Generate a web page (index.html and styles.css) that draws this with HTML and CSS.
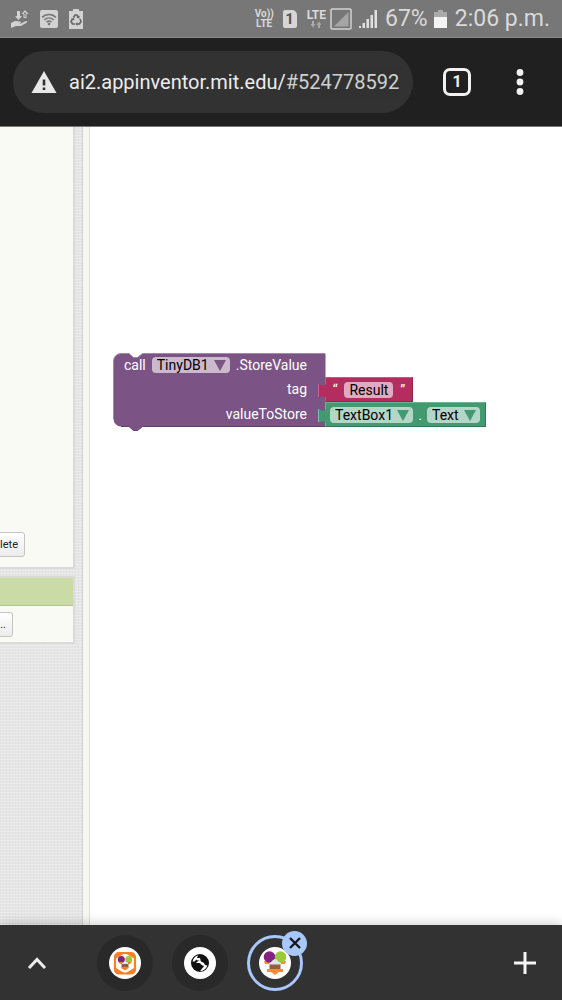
FILE: index.html
```html
<!DOCTYPE html>
<html lang="en">
<head>
    <meta charset="UTF-8">
    <meta name="viewport" content="width=device-width, initial-scale=1.0">
    <title>MIT App Inventor</title>
    <link rel="stylesheet" href="styles.css">
</head>
<body>
    <header class="status-bar">
        <div class="status-left">
            <svg width="20" height="20" viewBox="0 0 20 20" fill="#d2d2d2">
                <path d="M7 2h3v5h2l-3.500 4L5 7h2zM15 1l3.500 4h-2v4h-3V5h-2z"/>
                <path d="M15 3l-1.500 1.800h1V8h1V4.800h1z" fill="#777"/>
                <path d="M1 14l4-2 5 .5c1.500.3 1 1.700-.5 1.800H8l3 .2 5-2.500c1.500-.3 1.500 1 .5 1.700L11 17H6l-5 2z"/>
            </svg>
            <svg width="20" height="20" viewBox="0 0 20 20">
                <rect x="1" y="1" width="18" height="18" rx="2" fill="#d2d2d2"/>
                <g fill="none" stroke="#777" stroke-width="1.600">
                    <path d="M3 8.500c4-4 10-4 14 0M5.300 11c2.800-2.700 6.600-2.700 9.400 0M7.600 13.200c1.500-1.300 3.300-1.300 4.800 0"/>
                </g>
                <circle cx="10" cy="15" r="1.300" fill="#777"/>
            </svg>
            <svg width="16" height="22" viewBox="0 0 16 22">
                <path d="M1 3h4V1h6v2h4v18H1z" fill="#d2d2d2"/>
                <g fill="none" stroke="#666" stroke-width="1.700">
                    <path d="M5.500 9.500L7 7h2l1.500 2.500M12 11l1 2.500-1.500 2.500H9M7 16H4.500L3 13.500 4.500 11"/>
                </g>
                <path d="M11.500 7.500v3l-3-.7zM9.500 14v4l-2.200-2zM3 10.500l3-.5.500 2.500z" fill="#666"/>
            </svg>
        </div>
        <div class="status-right">
            <span class="volte"><span>Vo))</span><span>LTE</span></span>
            <span class="sim">1</span>
            <span class="lte">LTE
                <svg width="12" height="7" viewBox="0 0 12 7" fill="#aaa"><path d="M2 0h2v3h1.500L3 6.500.5 3H2zM8 7h2V4h1.500L9 .5 6.500 4H8z"/></svg>
            </span>
            <svg class="roaming" width="22" height="22" viewBox="0 0 22 22">
                <rect x="1" y="1" width="20" height="20" rx="1" fill="none" stroke="#d2d2d2" stroke-width="1.500"/>
                <path d="M4 18.500L18.500 4v14.500z" fill="#a5a5a5"/>
            </svg>
            <svg class="signal" width="20" height="20" viewBox="0 0 20 20" fill="#e0e0e0">
                <path d="M1 17h2v2H1zM4.500 14H7v5H4.500zM8.500 10H11v9H8.500zM12.500 6H15v13h-2.500zM16.500 1H19v18h-2.500z"/>
            </svg>
            <span class="status-text percent">67%</span>
            <svg class="battery" width="13" height="18" viewBox="0 0 13 18">
                <path d="M0 2h4V0h5v2h4v5H0z" fill="#aaa"/>
                <path d="M0 7h13v11H0z" fill="#f4f4f4"/>
            </svg>
            <time class="status-text">2:06 p.m.</time>
        </div>
    </header>

    <nav class="toolbar">
        <div class="omnibox">
            <svg width="26" height="24" viewBox="0 0 26 24">
                <path d="M13 1l12.500 22H.5z" fill="#e8e8e8"/>
                <path d="M11.700 9.500h2.600v6h-2.600zM11.700 17.500h2.600V20h-2.600z" fill="#323232"/>
            </svg>
            <div class="url-box">
                <input class="url" type="text" aria-label="Address" value="ai2.appinventor.mit.edu/#524778592">
            </div>
        </div>
        <button class="tab-count" aria-label="Open tabs"><span>1</span></button>
        <button class="menu-btn" aria-label="Menu">
            <svg width="8" height="28" viewBox="0 0 8 28" fill="#f1f1f1">
                <circle cx="4" cy="4.500" r="3.400"/><circle cx="4" cy="14" r="3.400"/><circle cx="4" cy="23.500" r="3.400"/>
            </svg>
        </button>
    </nav>

    <main class="designer">
        <aside class="sidebar">
            <section class="panel panel-blocks">
                <button class="gray-btn delete-btn">Delete</button>
            </section>
            <section class="panel panel-media">
                <div class="panel-head"></div>
                <button class="gray-btn upload-btn">Upload File ...</button>
            </section>
        </aside>
        <div class="gutter"></div>

        <div class="workspace">
            <div class="block-stack">
                <div class="call-block">
                    <svg class="call-shape" width="213" height="79" viewBox="0 0 213 79">
                        <path d="M0.500 8A7.500 7.500 0 0 1 8 .5H16l4.500 4h4l5-4H212.500V73.500H29.500l-5 4h-4l-4.500-4H8A7.500 7.500 0 0 1 .5 66z" fill="#7c5385"/>
                        <path d="M0.500 66V8A7.500 7.500 0 0 1 8 .5H16l4.500 4h4l5-4H212" fill="none" stroke="#a488aa"/>
                        <path d="M212.500 73.500H29.500l-5 4h-4l-4.500-4H8" fill="none" stroke="#5f3d68"/>
                    </svg>
                    <div class="call-row first">
                        <span>call</span>
                        <span class="drop drop-purple">
                            <select aria-label="Component"><option>TinyDB1</option></select>
                        </span>
                        <span>.StoreValue</span>
                    </div>
                    <div class="call-row">tag</div>
                    <div class="call-row">valueToStore</div>
                </div>
                <div class="values">
                    <div class="value-block text-block">
                        <svg class="plug" width="9" height="16" viewBox="0 0 9 16"><path d="M9 0C9 6 1 0 1 1v13c0 2 8-4 8 2z" fill="#b32d5e"/><path d="M1.500 14V1" stroke="#d0648c"/></svg>
                        <span>“</span>
                        <input class="text-field" type="text" aria-label="Text" value="Result">
                        <span>”</span>
                    </div>
                    <div class="value-block getter-block">
                        <svg class="plug" width="9" height="16" viewBox="0 0 9 16"><path d="M9 0C9 6 1 0 1 1v13c0 2 8-4 8 2z" fill="#439970"/><path d="M1.500 14V1" stroke="#80bc9f"/></svg>
                        <span class="drop drop-green drop-wide">
                            <select aria-label="Text box"><option>TextBox1</option></select>
                        </span>
                        <span>.</span>
                        <span class="drop drop-green drop-narrow">
                            <select aria-label="Property"><option>Text</option></select>
                        </span>
                    </div>
                </div>
            </div>
        </div>
    </main>

    <footer class="tab-strip">
        <button class="strip-btn" aria-label="Expand tabs">
            <svg width="20" height="14" viewBox="0 0 20 14"><path d="M2 12l8-8.500 8 8.500" fill="none" stroke="#ececec" stroke-width="3"/></svg>
        </button>
        <div class="tabs">
            <button class="tab" aria-label="Community">
                <svg width="32" height="32" viewBox="0 0 32 32">
                    <circle cx="16" cy="16" r="16" fill="#fff"/>
                    <rect x="6" y="6" width="20" height="20.500" rx="4" fill="#fff" stroke="#f58025" stroke-width="2.200"/>
                    <path d="M7 6h9l-9 5.500zM25 6h-9l9 5.500zM7 26.500h9L7 21zM25 26.500h-9l9-5.500z" fill="#f58025"/>
                    <circle cx="12.300" cy="12.500" r="3.500" fill="#85217f"/>
                    <circle cx="19.700" cy="12.500" r="3.500" fill="#9bc93c"/>
                    <path d="M9.500 15h3.500v2h-2zM19 15h3.500L21 17h-2zM11.500 20.500h9L16 23.500z" fill="#f58025"/>
                    <path d="M12.500 17h7v3.500h-7z" fill="#955f3d"/>
                    <path d="M13.500 15.500h5v1.500h-5z" fill="#dde5e7"/>
                </svg>
            </button>
            <button class="tab" aria-label="Web page">
                <svg width="32" height="32" viewBox="0 0 32 32">
                    <circle cx="16" cy="16" r="16" fill="#fff"/>
                    <circle cx="16" cy="16" r="9" fill="#111"/>
                    <path d="M8.600 14.500c.5-3 2.400-5.200 5.400-6l-1 2.500h3l.5 2-3 1.500-1.500 1.500h3.500c1.500 0 1.500 2.500 3 2.500 2 0 1.500 1.500 0 2.500l-2.500 3.200c3.500-.3 6.500-2.500 7.300-5.700l-2.300-.5-1-2-3-1.500v-1h-3.500l-1-1-2 2z" fill="#fff"/>
                </svg>
            </button>
            <button class="tab active" aria-label="App Inventor">
                <svg width="32" height="32" viewBox="0 0 32 32">
                    <circle cx="16" cy="16" r="16" fill="#fff"/>
                    <path d="M5 14l6 0-1 3-4 0zM27 14l-6 0 1 3 4 0zM8 22h16v3h-4l-2 1.500L16 28l-2-1.500-2-1.500H8z" fill="#f68b3b"/>
                    <circle cx="10.500" cy="10" r="5.800" fill="#85217f"/>
                    <circle cx="21.500" cy="10" r="5.800" fill="#9bc93c"/>
                    <path d="M9 18l5-5 2-1 2 1 5 5z" fill="#dde5e7"/>
                    <path d="M10.500 17.500h11V22h-11z" fill="#955f3d"/>
                </svg>
                <span class="close-badge">
                    <svg width="12" height="12" viewBox="0 0 12 12"><path d="M1 1l10 10M11 1L1 11" stroke="#16191d" stroke-width="2.400"/></svg>
                </span>
            </button>
        </div>
        <button class="strip-btn" aria-label="New tab">
            <svg width="24" height="24" viewBox="0 0 24 24"><path d="M12 1v22M1 12h22" stroke="#f4f4f4" stroke-width="3"/></svg>
        </button>
    </footer>
</body>
</html>
```

FILE: styles.css
```css
* {
    box-sizing: border-box;
}

body {
    margin: 0;
    min-height: 100vh;
    display: flex;
    flex-direction: column;
    font-family: Roboto, sans-serif;
    background: #fff;
    overflow: hidden;
}

button,
input,
select {
    font-family: inherit;
    margin: 0;
    padding: 0;
    border: none;
    background: none;
}

svg {
    display: block;
    flex: none;
}

/* Status bar */
.status-bar {
    display: flex;
    justify-content: space-between;
    align-items: center;
    height: 38px;
    padding: 0 12px 0 10px;
    background: #777;
    border-bottom: 1px solid #888;
    color: #dadada;
}

.status-left,
.status-right {
    display: flex;
    align-items: center;
}

.status-left {
    gap: 9px;
}

.volte,
.lte {
    display: flex;
    flex-direction: column;
    align-items: center;
    font-size: 10px;
    line-height: 10px;
    font-weight: 700;
}

.lte {
    gap: 1px;
    font-size: 12px;
    margin-right: 4px;
}

.sim {
    width: 14px;
    height: 18px;
    margin: 0 10px 0 9px;
    border-radius: 2px 5px 2px 2px;
    background: #d6d6d6;
    color: #555;
    font-size: 15px;
    line-height: 18px;
    font-weight: 700;
    text-align: center;
}

.signal {
    margin: 0 7px 0 6px;
}

.battery {
    margin: 0 8px 0 6px;
}

.status-text {
    font-size: 23px;
    line-height: 36px;
}

/* Browser toolbar */
.toolbar {
    display: flex;
    align-items: center;
    height: 89px;
    padding: 0 24px 0 13px;
    background: #202020;
    border-bottom: 1px solid #777;
}

.omnibox {
    flex: 1;
    min-width: 0;
    display: flex;
    align-items: center;
    gap: 12px;
    height: 62px;
    padding: 0 12px 0 18px;
    border-radius: 31px;
    background: #323232;
}

.url-box {
    flex: 1;
    min-width: 0;
    position: relative;
}

/* dims the path after the host name */
.url-box::after {
    content: "";
    position: absolute;
    top: 0;
    bottom: 0;
    left: 217px;
    right: 0;
    background: rgba(50, 50, 50, 0.15);
    pointer-events: none;
}

.url {
    display: block;
    width: 100%;
    height: 32px;
    color: #ececec;
    font-size: 20px;
    outline: none;
}

.tab-count {
    width: 88px;
    height: 62px;
    display: flex;
    align-items: center;
    justify-content: center;
}

.tab-count span {
    width: 28px;
    height: 28px;
    border: 3px solid #f1f1f1;
    border-radius: 7px;
    color: #f1f1f1;
    font-size: 16px;
    line-height: 22px;
    font-weight: 700;
}

.menu-btn {
    width: 37px;
    height: 62px;
    display: flex;
    align-items: center;
    justify-content: center;
}

/* Designer */
.designer {
    flex: 1;
    display: flex;
    background-color: #e5e5e5;
    background-image:
        repeating-linear-gradient(0deg, rgba(255, 255, 255, 0.3) 0 1px, transparent 1px 3px),
        repeating-linear-gradient(90deg, rgba(0, 0, 0, 0.02) 0 1px, transparent 1px 3px);
}

.sidebar {
    width: 75px;
    display: flex;
    flex-direction: column;
    align-items: flex-end;
    gap: 7px;
    overflow: hidden;
}

.panel {
    width: 200px;
    display: flex;
    flex-direction: column;
    align-items: flex-end;
    background: #f9faf4;
    border: 2px solid #dadada;
}

.panel-blocks {
    min-height: 442px;
    justify-content: flex-end;
    padding: 0 48px 10px 0;
    border-top: none;
}

.panel-head {
    width: 100%;
    height: 28px;
    background: #cbdba6;
    border-bottom: 1px solid #b5c394;
}

.gray-btn {
    height: 25px;
    padding: 0 6px;
    border: 1px solid #c4c4c4;
    border-radius: 3px;
    background: linear-gradient(#fff, #ececec);
    color: #222;
    font-size: 11px;
    white-space: nowrap;
}

.upload-btn {
    margin: 6px 60px 5px 0;
}

.gutter {
    width: 15px;
    margin-left: auto;
    background: linear-gradient(90deg, transparent 7px, #d2d2d2 7px 8px, #f6f7f1 8px 14px, #ddd 14px);
}

/* Blocks workspace */
.workspace {
    flex: 1;
    position: relative;
    background: #fff;
}

.block-stack {
    position: absolute;
    left: 23px;
    top: 226px;
    display: flex;
    align-items: flex-end;
    color: #fff;
    font-size: 14px;
}

.call-block {
    position: relative;
    width: 212px;
    padding-right: 18px;
}

.call-shape {
    position: absolute;
    left: 0;
    top: 0;
}

.call-row {
    position: relative;
    display: flex;
    align-items: center;
    justify-content: flex-end;
    height: 25px;
    padding-bottom: 1px;
}

.call-row.first {
    height: 24px;
    gap: 6px;
    padding-bottom: 0;
}

.drop {
    position: relative;
    width: 78px;
    height: 16px;
    border-radius: 4px;
}

.drop::after {
    content: "";
    position: absolute;
    top: 3px;
    right: 4px;
    border: 6px solid transparent;
    border-top: 11px solid;
    border-bottom: none;
    pointer-events: none;
}

.drop-purple {
    background: #cbbace;
    color: #7c5385;
}

.drop-green {
    background: #b4d6c6;
    color: #439970;
}

.drop-wide {
    width: 83px;
}

.drop-narrow {
    width: 53px;
}

.drop select {
    display: block;
    width: 100%;
    height: 16px;
    padding-left: 5px;
    appearance: none;
    color: #000;
    font-size: 14px;
    line-height: 16px;
}

.value-block {
    position: relative;
    display: flex;
    align-items: center;
    height: 25px;
    border: 1px solid;
}

.plug {
    position: absolute;
    left: -9px;
    top: 5px;
}

.text-block {
    width: 88px;
    justify-content: space-evenly;
    background: #b32d5e;
    border-color: #c9577f #8e244b #8e244b #c9577f;
}

.getter-block {
    width: 161px;
    justify-content: space-between;
    padding: 0 5px 0 4px;
    background: #439970;
    border-color: #6fb392 #347858 #347858 #6fb392;
}

.text-field {
    width: 49px;
    height: 16px;
    border-radius: 4px;
    background: #e1abbf;
    color: #000;
    font-size: 14px;
    text-align: center;
}

/* Bottom tab strip */
.tab-strip {
    position: relative;
    display: flex;
    align-items: center;
    height: 75px;
    background: #323232;
    box-shadow: 0 -2px 10px rgba(0, 0, 0, 0.18);
}

.strip-btn {
    width: 74px;
    height: 75px;
    display: flex;
    align-items: center;
    justify-content: center;
}

.tabs {
    flex: 1;
    display: flex;
    gap: 19px;
    padding-left: 23px;
}

.tab {
    position: relative;
    width: 56px;
    height: 56px;
    display: flex;
    align-items: center;
    justify-content: center;
    border-radius: 50%;
    background: #292929;
}

.tab.active {
    border: 3px solid #a8c7fa;
    background: #323232;
}

.close-badge {
    position: absolute;
    top: -7px;
    right: -7px;
    width: 25px;
    height: 25px;
    display: flex;
    align-items: center;
    justify-content: center;
    border-radius: 50%;
    background: #a8c7fa;
}
```
